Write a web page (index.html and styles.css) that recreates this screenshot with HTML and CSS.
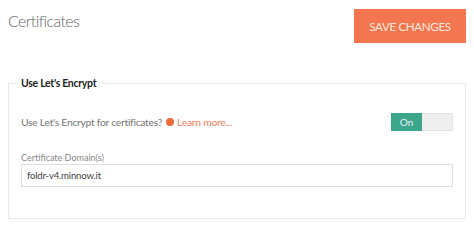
FILE: index.html
```html
<!DOCTYPE html>
<html lang="en">

<head>
    <meta charset="UTF-8">
    <meta name="viewport" content="width=device-width, initial-scale=1.0">
    <link rel="stylesheet" href="styles.css">
    <title>Certificates</title>
</head>

<body>
    <div class="page-header">
        <h1 class="title">Certificates</h1>
        <button class="save">SAVE CHANGES</button>
    </div>

    <fieldset class="panel">
        <legend>Use Let's Encrypt</legend>

        <div class="option-row">
            <span class="option-text">Use Let's Encrypt for certificates?
                <span class="dot"></span><a class="learn" href="#">Learn more...</a>
            </span>
            <div class="toggle">
                <span class="toggle-on">On</span>
                <span class="toggle-off"></span>
            </div>
        </div>

        <label class="field-label" for="domain">Certificate Domain(s)</label>
        <input type="text" id="domain" class="field" value="foldr-v4.minnow.it">
    </fieldset>
</body>

</html>
```

FILE: styles.css
```css
* {
    box-sizing: border-box;
    margin: 0;
    padding: 0;
}

body {
    background-color: #fff;
    font-family: Lato, "Open Sans", sans-serif;
    padding: 9px 8px;
}

.page-header {
    display: flex;
    justify-content: space-between;
    align-items: flex-start;
}

.title {
    font-size: 16px;
    font-weight: 300;
    letter-spacing: -0.6px;
    color: #666;
    line-height: 22px;
    margin-top: 1px;
}

.save {
    width: 112px;
    height: 34px;
    border: none;
    background-color: #f37650;
    color: #fde9df;
    font-family: Lato, sans-serif;
    font-size: 11.5px;
    letter-spacing: -0.3px;
    cursor: pointer;
}

.panel {
    margin-top: 33px;
    border: 1px solid #e8e8e8;
    padding: 23px 12px 31px 12px;
}

.panel legend {
    font-size: 10.5px;
    font-weight: 700;
    letter-spacing: -0.3px;
    color: #222;
    line-height: 14px;
    padding: 0 3px;
    margin-left: -3px;
}

.option-row {
    display: flex;
    justify-content: space-between;
    align-items: center;
}

.option-text {
    font-size: 10.4px;
    letter-spacing: -0.3px;
    color: #777;
    display: flex;
    align-items: center;
}

.dot {
    display: inline-block;
    width: 8px;
    height: 8px;
    border-radius: 50%;
    background-color: #f26b3a;
    margin: 0 3px 0 4px;
}

.learn {
    color: #f0805e;
    text-decoration: none;
}

.toggle {
    display: flex;
    width: 62px;
    height: 18px;
}

.toggle-on {
    width: 31px;
    background-color: #3ba68a;
    color: #eef;
    font-size: 10px;
    text-align: center;
    line-height: 18px;
}

.toggle-off {
    width: 31px;
    background-color: #efefef;
    border: 1px solid #e2e2e2;
    border-left: none;
}

.field-label {
    display: block;
    margin-top: 21px;
    font-size: 9px;
    color: #888;
    line-height: 12px;
}

.field {
    display: block;
    width: 100%;
    height: 23px;
    border: 1px solid #dedede;
    padding: 0 5px;
    font-family: Lato, sans-serif;
    font-size: 9.6px;
    letter-spacing: -0.2px;
    color: #444;
}
```
